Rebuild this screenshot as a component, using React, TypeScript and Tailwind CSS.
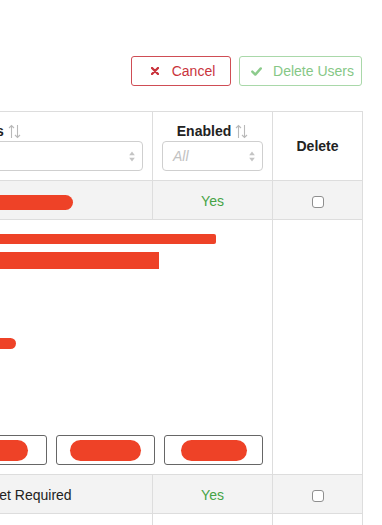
import React from 'react';

const SortIcon = () => (
  <svg width="13" height="15" viewBox="0 0 13 15" className="inline-block ml-1 -mt-0.5 align-middle" fill="none" stroke="#b9b9b9" strokeWidth="1.1">
    <path d="M3.5 14V1.5M1 4l2.5-2.5L6 4" />
    <path d="M9.5 1v12.5M7 11l2.5 2.5L12 11" />
  </svg>
);

const SelectArrows = () => (
  <svg width="6" height="11" viewBox="0 0 6 11" fill="#c4c4c4">
    <path d="M3 0.5L5.8 4.2H0.2z" />
    <path d="M3 10.5L5.8 6.8H0.2z" />
  </svg>
);

const Checkbox = () => (
  <span className="inline-block w-[12px] h-[12px] border border-[#8f8f8f] rounded-[3px] bg-white align-middle" />
);

const Redact = ({ className }: { className: string }) => <div className={`bg-[#ee4227] ${className}`} />;

const App = () => {
  return (
    <div className="w-[382px] h-[525px] overflow-hidden bg-white text-[14px] text-[#222] font-['Liberation_Sans',Arial,sans-serif]">
      {/* Toolbar */}
      <div className="flex justify-end gap-2 pt-[56px] pr-[20px]">
        <button className="w-[100px] h-[30px] flex items-center justify-center gap-[13px] pl-[4px] border border-[#cf4d55] rounded-[3px] text-[#c9333c]">
          <svg width="8" height="8" viewBox="0 0 8 8" stroke="#c9333c" strokeWidth="2.4" strokeLinecap="round">
            <path d="M1 1l6 6M7 1L1 7" />
          </svg>
          Cancel
        </button>
        <button className="w-[123px] h-[30px] flex items-center justify-center gap-[11px] pl-[4px] border border-[#a9d8a9] rounded-[3px] text-[#86c786]">
          <svg width="11" height="9" viewBox="0 0 11 9" fill="none" stroke="#8ccb8c" strokeWidth="2.4" strokeLinecap="round" strokeLinejoin="round">
            <path d="M1.3 4.6l3 3L9.8 1.4" />
          </svg>
          Delete Users
        </button>
      </div>

      {/* Users table */}
      <table className="mt-[25px] ml-[-100px] table-fixed border-collapse w-[462px]">
        <colgroup>
          <col className="w-[252px]" />
          <col className="w-[120px]" />
          <col className="w-[90px]" />
        </colgroup>
        <thead>
          <tr>
            <th className="border border-[#ddd] px-[9px] pt-[9px] pb-[9px] font-bold align-top">
              <div className="h-[20px] leading-[20px] text-left pl-[51px]">
                Status
                <SortIcon />
              </div>
              <div className="h-[30px] border border-[#cfcfcf] rounded-[4px] flex items-center justify-end pr-[7px]">
                <SelectArrows />
              </div>
            </th>
            <th className="border border-[#ddd] px-[9px] pt-[9px] pb-[9px] font-bold align-top">
              <div className="h-[20px] leading-[20px] text-center">
                Enabled
                <SortIcon />
              </div>
              <div className="h-[30px] border border-[#cfcfcf] rounded-[4px] flex items-center justify-between pl-[10px] pr-[7px]">
                <span className="italic font-normal text-[#c2c2c2]">All</span>
                <SelectArrows />
              </div>
            </th>
            <th className="border border-[#ddd] font-bold align-middle text-center">Delete</th>
          </tr>
        </thead>
        <tbody>
          <tr className="bg-[#f3f3f3]">
            <td className="border border-[#ddd] h-[39px] px-2 pt-[4px] align-middle">
              <Redact className="w-[164px] h-[15px] rounded-r-full" />
            </td>
            <td className="border border-[#ddd] pt-[2px] text-center text-[#46a346]">Yes</td>
            <td className="border border-[#ddd] pt-[2px] text-center">
              <Checkbox />
            </td>
          </tr>
          <tr>
            <td colSpan={2} className="border border-[#ddd] h-[255px] px-2 pt-[14px] pb-[8px] align-top">
              <Redact className="w-[307px] h-[10px] rounded-r-[2px]" />
              <Redact className="w-[250px] h-[17px] mt-[8px]" />
              <Redact className="w-[107px] h-[11px] mt-[69px] rounded-r-full" />
              <div className="flex justify-end gap-[9px] mt-[86px] pr-[1px]">
                {[61, 71, 66].map((w, i) => (
                  <div key={i} className="w-[99px] h-[30px] border border-[#666] rounded-[3px] flex items-center justify-center">
                    <div className="bg-[#ee4227] h-[21px] rounded-full" style={{ width: w }} />
                  </div>
                ))}
              </div>
            </td>
            <td className="border border-[#ddd]" />
          </tr>
          <tr className="bg-[#f3f3f3]">
            <td className="border border-[#ddd] h-[39px] px-2 pt-[2px] align-middle whitespace-nowrap">Password Reset Required</td>
            <td className="border border-[#ddd] pt-[2px] text-center text-[#46a346]">Yes</td>
            <td className="border border-[#ddd] pt-[2px] text-center">
              <Checkbox />
            </td>
          </tr>
          <tr>
            <td className="border border-[#ddd] h-[39px] px-2" />
            <td className="border border-[#ddd]" />
            <td className="border border-[#ddd]" />
          </tr>
        </tbody>
      </table>
    </div>
  );
};

export default App;
